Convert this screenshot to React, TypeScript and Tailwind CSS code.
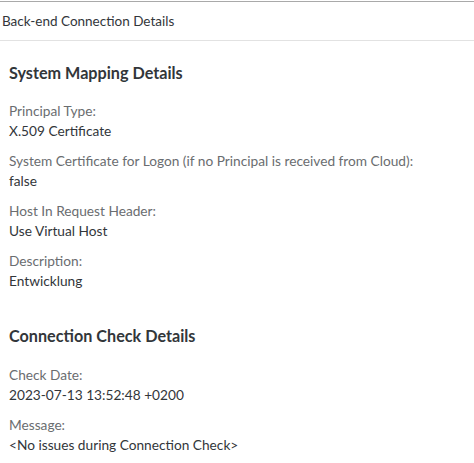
import React from "react";

const Field = ({ label, value }: { label: string; value: string }) => (
  <div className="flex flex-col mb-[10px]">
    <div className="text-[13.7px] leading-[20px] text-[#6a6d70]">{label}</div>
    <div className="text-[13.7px] leading-[20px] text-[#32363a]">{value}</div>
  </div>
);

export default function App() {
  return (
    <div className="w-[474px] h-[463px] bg-white overflow-hidden" style={{ fontFamily: 'Lato, "Noto Sans", sans-serif' }}>
      <div className="h-[2px] bg-[#ffffff] border-b-[1px] border-[#a9a9a9]" />
      <div className="h-[39px] flex items-center px-[2px] border-b border-[#e2e2e2] text-[13.5px] text-[#32363a]">
        Back-end Connection Details
      </div>
      <div className="px-[9px]">
        <div className="pt-[21px] pb-[17px] text-[16.2px] leading-[22px] font-bold text-[#32363a]">System Mapping Details</div>
        <Field label="Principal Type:" value="X.509 Certificate" />
        <Field label="System Certificate for Logon (if no Principal is received from Cloud):" value="false" />
        <Field label="Host In Request Header:" value="Use Virtual Host" />
        <Field label="Description:" value="Entwicklung" />
        <div className="pt-[24px] pb-[18px] text-[16.2px] leading-[22px] font-bold text-[#32363a]">Connection Check Details</div>
        <Field label="Check Date:" value="2023-07-13 13:52:48 +0200" />
        <Field label="Message:" value="<No issues during Connection Check>" />
      </div>
    </div>
  );
}
